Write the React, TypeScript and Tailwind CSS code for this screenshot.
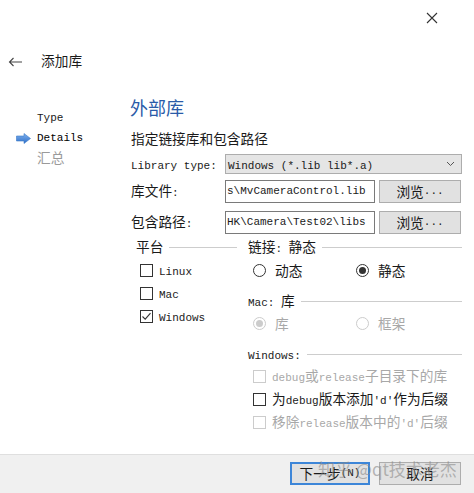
import React from 'react'

const mono = "font-['Liberation_Mono',monospace] text-[11px]"

function Mono({ children }: { children: React.ReactNode }) {
    return <span className={mono}>{children}</span>
}

function GroupTitle({ children, className = '' }: { children: React.ReactNode; className?: string }) {
    return (
        <div className={`flex items-center h-[16px] ${className}`}>
            <span className="whitespace-nowrap">{children}</span>
            <div className="flex-1 ml-[6px] border-t border-[#cdcdcd]" />
        </div>
    )
}

function CheckBox({ checked = false, disabled = false, children }: { checked?: boolean; disabled?: boolean; children: React.ReactNode }) {
    return (
        <div className={`flex items-center h-[23px] ${disabled ? 'text-[#a8a8a8]' : ''}`}>
            <div className={`w-[13px] h-[13px] border bg-white flex items-center justify-center ${disabled ? 'border-[#cccccc]' : 'border-[#333333]'}`}>
                {checked && (
                    <svg width="11" height="11" viewBox="0 0 11 11">
                        <path d="M1.5 5.5 L4.2 8.2 L9.5 2.2" fill="none" stroke="#333" strokeWidth="1.1" />
                    </svg>
                )}
            </div>
            <span className="ml-[6px] whitespace-nowrap">{children}</span>
        </div>
    )
}

function Radio({ checked = false, disabled = false, children }: { checked?: boolean; disabled?: boolean; children: React.ReactNode }) {
    return (
        <div className={`flex items-center w-[103px] h-[23px] ${disabled ? 'text-[#a8a8a8]' : ''}`}>
            <div className={`w-[13px] h-[13px] rounded-full border bg-white flex items-center justify-center ${disabled ? 'border-[#cccccc]' : 'border-[#333333]'}`}>
                {checked && <div className={`w-[7px] h-[7px] rounded-full ${disabled ? 'bg-[#cccccc]' : 'bg-[#333333]'}`} />}
            </div>
            <span className="ml-[9px] whitespace-nowrap">{children}</span>
        </div>
    )
}

function Button({ children, focused = false }: { children: React.ReactNode; focused?: boolean }) {
    return (
        <div className={`h-[23px] flex items-center justify-center bg-[#e1e1e1] ${focused ? 'w-[80px] border-2 border-[#3d86d8]' : 'w-[82px] border border-[#adadad]'}`}>
            {children}
        </div>
    )
}

export default function App() {
    return (
        <div className="w-[474px] h-[493px] bg-white flex flex-col text-[13.7px] text-[#1a1a1a] leading-none font-['Noto_Sans_CJK_SC',sans-serif] relative overflow-hidden">
            {/* top bar */}
            <div className="h-[50px] flex justify-end pt-[12px] pr-[36px]">
                <svg width="12" height="12" viewBox="0 0 12 12">
                    <path d="M1 1 L11 11 M11 1 L1 11" stroke="#333" strokeWidth="1.1" />
                </svg>
            </div>

            {/* title */}
            <div className="h-[24px] flex items-center pl-[8px]">
                <svg width="15" height="10" viewBox="0 0 15 10">
                    <path d="M14 5 H1.5 M5.5 1 L1.5 5 L5.5 9" fill="none" stroke="#444" strokeWidth="1.1" />
                </svg>
                <span className="ml-[18px] -mt-[2px]">添加库</span>
            </div>

            {/* body */}
            <div className="flex-1 flex">
                {/* nav */}
                <div className="w-[130px] pt-[34px] pl-[16px]">
                    <div className="flex items-center h-[20px]">
                        <div className="w-[21px]" />
                        <Mono>Type</Mono>
                    </div>
                    <div className="flex items-center h-[20px]">
                        <div className="w-[21px]">
                            <svg width="15" height="11" viewBox="0 0 15 11">
                                <defs>
                                    <linearGradient id="ar" x1="0" y1="0" x2="0" y2="1">
                                        <stop offset="0" stopColor="#7fb2ee" />
                                        <stop offset="1" stopColor="#2f6fc9" />
                                    </linearGradient>
                                </defs>
                                <path d="M0.5 3 H8 V0.5 L14.5 5.5 L8 10.5 V8 H0.5 Z" fill="url(#ar)" stroke="#3a78c8" strokeWidth="0.6" />
                            </svg>
                        </div>
                        <span className="font-['Liberation_Mono',monospace] text-[11px] text-black">Details</span>
                    </div>
                    <div className="flex items-center h-[20px] text-[#9a9a9a]">
                        <div className="w-[21px]" />
                        <span>汇总</span>
                    </div>
                </div>

                {/* main */}
                <div className="w-[332px] pt-[21px]">
                    <div className="h-[24px] flex items-center text-[18px] text-[#2a5ba8]">外部库</div>
                    <div className="h-[20px] mt-[10px] flex items-center pl-[1px]">指定链接库和包含路径</div>

                    <div className="h-[20px] mt-[5px] flex items-center">
                        <div className="w-[95px] pl-[1px]"><Mono>Library type:</Mono></div>
                        <div className="flex-1 h-[20px] bg-[#e5e5e5] border border-[#adadad] flex items-center pl-[2px] pr-[6px]">
                            <span className="flex-1"><Mono>Windows (*.lib lib*.a)</Mono></span>
                            <svg width="9" height="6" viewBox="0 0 9 6">
                                <path d="M1 1 L4.5 4.5 L8 1" fill="none" stroke="#555" strokeWidth="1" />
                            </svg>
                        </div>
                    </div>

                    <div className="h-[23px] mt-[6px] flex items-center">
                        <div className="w-[95px] pl-[1px]">库文件<Mono>:</Mono></div>
                        <div className="w-[150px] h-[23px] border border-[#7a7a7a] bg-white flex items-center pl-[1px] overflow-hidden whitespace-nowrap">
                            <Mono>{'s\\MvCameraControl.lib'}</Mono>
                        </div>
                        <div className="ml-[4px]"><Button>浏览<Mono>...</Mono></Button></div>
                    </div>

                    <div className="h-[23px] mt-[8px] flex items-center">
                        <div className="w-[95px] pl-[1px]">包含路径<Mono>:</Mono></div>
                        <div className="w-[150px] h-[23px] border border-[#7a7a7a] bg-white flex items-center pl-[1px] overflow-hidden whitespace-nowrap">
                            <Mono>{'HK\\Camera\\Test02\\libs'}</Mono>
                        </div>
                        <div className="ml-[4px]"><Button>浏览<Mono>...</Mono></Button></div>
                    </div>

                    <div className="flex mt-[5px]">
                        {/* platform */}
                        <div className="w-[101px] ml-[6px]">
                            <GroupTitle>平台</GroupTitle>
                            <div className="pl-[4px] mt-[4px]">
                                <CheckBox><Mono>Linux</Mono></CheckBox>
                                <CheckBox><Mono>Mac</Mono></CheckBox>
                                <CheckBox checked><Mono>Windows</Mono></CheckBox>
                            </div>
                        </div>

                        {/* link */}
                        <div className="w-[214px] ml-[11px]">
                            <GroupTitle>链接<Mono>: </Mono>静态</GroupTitle>
                            <div className="flex pl-[5px] mt-[4px]">
                                <Radio>动态</Radio>
                                <Radio checked>静态</Radio>
                            </div>
                            <GroupTitle className="mt-[11px]"><Mono>Mac: </Mono>库</GroupTitle>
                            <div className="flex pl-[5px] mt-[3px]">
                                <Radio checked disabled>库</Radio>
                                <Radio disabled>框架</Radio>
                            </div>
                            <GroupTitle className="mt-[11px]"><Mono>Windows:</Mono></GroupTitle>
                            <div className="pl-[5px] mt-[3px]">
                                <CheckBox disabled><Mono>debug</Mono>或<Mono>release</Mono>子目录下的库</CheckBox>
                                <CheckBox>为<Mono>debug</Mono>版本添加<Mono>'d'</Mono>作为后缀</CheckBox>
                                <CheckBox disabled>移除<Mono>release</Mono>版本中的<Mono>'d'</Mono>后缀</CheckBox>
                            </div>
                        </div>
                    </div>
                </div>
            </div>

            {/* footer */}
            <div className="h-[39px] bg-[#f0f0f0] border-t border-[#dfdfdf] flex items-start justify-end pt-[7px] pr-[13px] gap-[9px]">
                <Button focused>下一步<Mono>(N)</Mono></Button>
                <Button>取消</Button>
            </div>

            {/* watermark */}
            <div className="absolute left-[318px] top-[460px] text-[17px] text-[#8a8a8a]/60 whitespace-nowrap pointer-events-none">
                知乎 @qt技术老杰
            </div>
        </div>
    )
}
